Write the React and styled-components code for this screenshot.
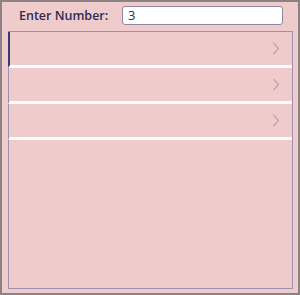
import React, { useState } from 'react';
import styled, { createGlobalStyle } from 'styled-components';

const GlobalStyle = createGlobalStyle`
  html, body {
    margin: 0;
    padding: 0;
    background: #efcbcb;
  }
  * { box-sizing: border-box; }
`;

const Frame = styled.div`
  width: 300px;
  height: 295px;
  background: #efcbcb;
  border: 2px solid #8c8284;
  display: flex;
  flex-direction: column;
  padding: 3px 5px 4px 6px;
  font-family: 'Open Sans', 'Liberation Sans', sans-serif;
`;

const Header = styled.div`
  display: flex;
  align-items: center;
  height: 20px;
  margin-bottom: 6px;
`;

const Label = styled.label`
  font-size: 12.5px;
  font-weight: 600;
  color: #2e2d55;
  margin-left: 11px;
  width: 103px;
`;

const NumberInput = styled.input`
  width: 161px;
  height: 19px;
  border: 1px solid #8e86a0;
  border-radius: 3px;
  background: #fff;
  font-family: 'Open Sans', 'Liberation Sans', sans-serif;
  font-size: 13px;
  color: #333;
  padding: 0 5px;
  outline: none;
`;

const Panel = styled.div`
  flex: 1;
  border: 1px solid #9a91ad;
  display: flex;
  flex-direction: column;
`;

const Row = styled.div`
  height: 36px;
  border-bottom: 3px solid #ffffff;
  border-left: 2px solid ${p => (p.$active ? '#3b3a72' : 'transparent')};
  margin-left: -1px;
  display: flex;
  align-items: center;
  justify-content: flex-end;
  padding-right: 12px;
`;

const Chevron = () => (
  <svg width="8" height="13" viewBox="0 0 8 13">
    <path d="M1.5 1 L6.5 6.5 L1.5 12" fill="none" stroke="#bca4ad" strokeWidth="1.2" />
  </svg>
);

export default function App() {
  const [value, setValue] = useState('3');
  const n = Math.max(0, Math.min(6, parseInt(value, 10) || 0));
  return (
    <>
      <GlobalStyle />
      <Frame>
        <Header>
          <Label>Enter Number:</Label>
          <NumberInput value={value} onChange={e => setValue(e.target.value)} />
        </Header>
        <Panel>
          {Array.from({ length: n }, (_, i) => (
            <Row key={i} $active={i === 0}>
              <Chevron />
            </Row>
          ))}
        </Panel>
      </Frame>
    </>
  );
}
